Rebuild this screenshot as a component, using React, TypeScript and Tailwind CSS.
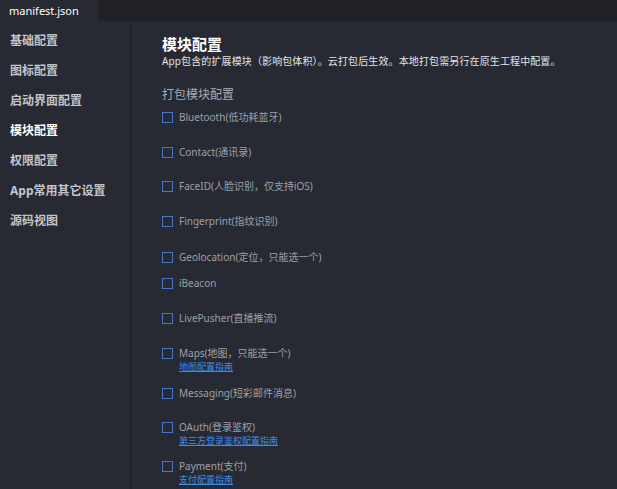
import React from "react";

const MENU = [
  { label: "基础配置", active: false },
  { label: "图标配置", active: false },
  { label: "启动界面配置", active: false },
  { label: "模块配置", active: true },
  { label: "权限配置", active: false },
  { label: "App常用其它设置", active: false },
  { label: "源码视图", active: false },
];

const MODULES = [
  { label: "Bluetooth(低功耗蓝牙)", h: "h-[35px]" },
  { label: "Contact(通讯录)", h: "h-[34px]" },
  { label: "FaceID(人脸识别，仅支持iOS)", h: "h-[35px]" },
  { label: "Fingerprint(指纹识别)", h: "h-[36px]" },
  { label: "Geolocation(定位，只能选一个)", h: "h-[26px]" },
  { label: "iBeacon", h: "h-[35px]" },
  { label: "LivePusher(直播推流)", h: "h-[35px]" },
  { label: "Maps(地图，只能选一个)", h: "h-[40px]", link: "地图配置指南" },
  { label: "Messaging(短彩邮件消息)", h: "h-[34px]" },
  { label: "OAuth(登录鉴权)", h: "h-[39px]", link: "第三方登录鉴权配置指南" },
  { label: "Payment(支付)", h: "h-[39px]", link: "支付配置指南" },
];

export default function App() {
  return (
    <div className="w-[617px] h-[489px] bg-[#272a33] flex flex-col overflow-hidden font-['Noto_Sans','Noto_Sans_CJK_SC',sans-serif]">
      {/* Tabs */}
      <div className="h-[21px] bg-[#202228] flex shrink-0">
        <div className="w-[98px] bg-[#272a33] text-[11px] leading-[21px] text-white pl-[9px]">
          manifest.json
        </div>
      </div>

      <div className="flex flex-1 min-h-0">
        {/* Sidebar */}
        <div className="w-[130px] pt-[5px] shrink-0">
          {MENU.map((m) => (
            <div
              key={m.label}
              className={`h-[30px] leading-[30px] pl-[10px] text-[12px] font-bold ${
                m.active ? "text-white" : "text-[#c3c5cb]"
              }`}
            >
              {m.label}
            </div>
          ))}
        </div>
        <div className="w-[1px] mt-[4px] bg-[#1c1e24] shrink-0" />

        {/* Main */}
        <div className="flex-1 pl-[31px] pt-[13px]">
          <div className="text-[15px] leading-[20px] font-bold text-white">模块配置</div>
          <div className="text-[10px] leading-[14px] tracking-[0.12px] text-[#e2e3e6]">
            App包含的扩展模块（影响包体积）。云打包后生效。本地打包需另行在原生工程中配置。
          </div>
          <div className="mt-[19px] text-[12px] leading-[16px] text-[#a7aab1]">打包模块配置</div>

          <div className="mt-[7px]">
            {MODULES.map((m) => (
              <div key={m.label} className={m.h}>
                <div className="flex items-center h-[14px]">
                  <span className="w-[11px] h-[11px] border border-[#4676c4] mr-[6px] shrink-0" />
                  <span className="text-[10px] leading-[14px] text-[#9da0a7]">{m.label}</span>
                </div>
                {m.link && (
                  <div className="pl-[17px] text-[9px] leading-[14px] text-[#3a8ee6] underline">
                    {m.link}
                  </div>
                )}
              </div>
            ))}
          </div>
        </div>
      </div>
    </div>
  );
}
